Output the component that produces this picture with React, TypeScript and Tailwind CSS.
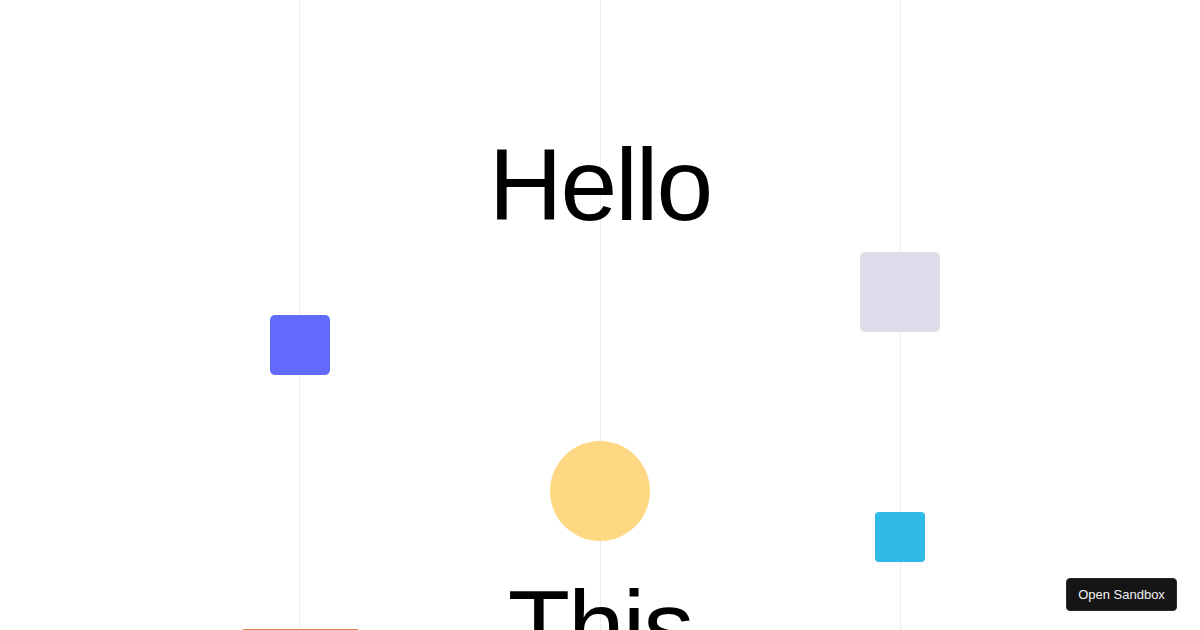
import React from "react";

const font = { fontFamily: '"Liberation Sans", Arial, sans-serif' };

function Column({ children, lineLeft }: { children: React.ReactNode; lineLeft: string }) {
  return (
    <div className="relative w-[300px] flex flex-col items-center">
      <div className={`absolute top-0 bottom-0 w-px bg-[#ececec] ${lineLeft}`} />
      <div className="relative flex flex-col items-center">{children}</div>
    </div>
  );
}

export default function App() {
  return (
    <div className="relative h-[630px] w-[1200px] overflow-hidden bg-white" style={font}>
      <div className="flex h-full justify-center">
        <Column lineLeft="left-[149px]">
          <div className="mt-[315px] h-[60px] w-[60px] rounded-[5px] bg-[#636bff]" />
          <div className="mt-[254px] h-[2px] w-[115px] bg-[#e97b49]" />
        </Column>
        <Column lineLeft="left-[150px]">
          <div className="mt-[134px] h-[102px] text-[102px] leading-none tracking-[-2px] text-black">Hello</div>
          <div className="mt-[205px] h-[100px] w-[100px] rounded-full bg-[#ffd884]" />
          <div className="mt-[35px] h-[102px] text-[102px] leading-none tracking-[-2px] text-black">This</div>
        </Column>
        <Column lineLeft="left-[150px]">
          <div className="mt-[252px] h-[80px] w-[80px] rounded-[5px] bg-[#dcdcea]" />
          <div className="mt-[180px] h-[50px] w-[50px] rounded-[4px] bg-[#2eb9e6]" />
        </Column>
      </div>
      <button className="absolute right-[23px] bottom-[19px] flex h-[33px] w-[111px] items-center justify-center rounded-[4px] border border-[#2a2a2a] bg-[#151515] text-[13px] text-[#f2f2f2]">
        Open Sandbox
      </button>
    </div>
  );
}
